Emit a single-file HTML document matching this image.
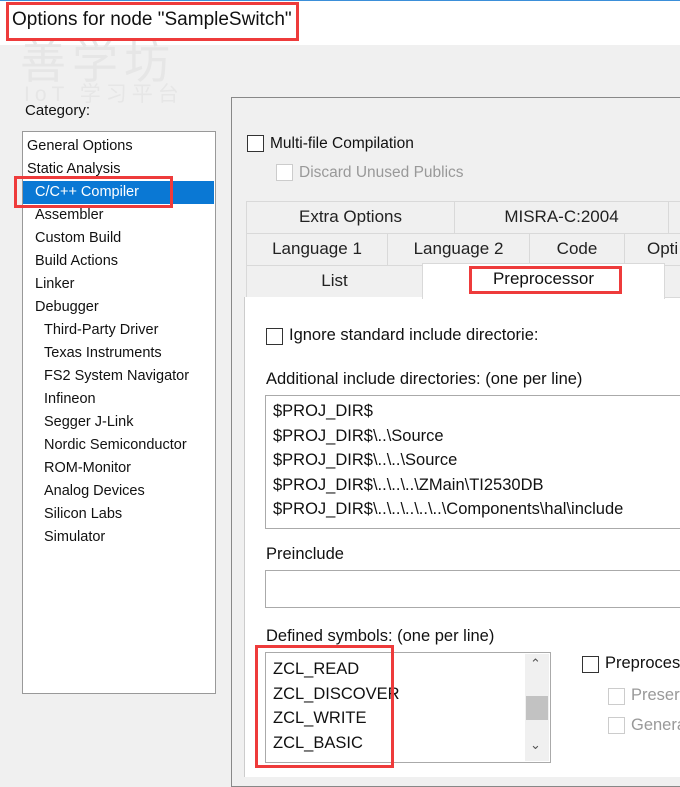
<!DOCTYPE html>
<html><head><meta charset="utf-8"><style>
*{margin:0;padding:0;box-sizing:border-box}
body{width:680px;height:776px;overflow:hidden;background:#f0f0f0;font-family:"Liberation Sans","Noto Sans CJK SC",sans-serif;position:relative;color:#111}
.a{position:absolute;white-space:nowrap}
.red{position:absolute;border:3px solid #ee3b3b}
.cb{position:absolute;width:17px;height:17px;border:1px solid #333;background:#fff}
.cbd{position:absolute;width:17px;height:17px;border:1px solid #ccc;background:#fff}
.tab{position:absolute;background:#f0f0f0;border:1px solid #d9d9d9;text-align:center;font-size:17px;line-height:30px;color:#222}
.li{position:absolute;left:27px;font-size:14.5px;line-height:23px}
.box{position:absolute;background:#fff;border:1px solid #aaa}
.t17{font-size:16.5px}
</style></head><body>
<div class="a" style="left:0;top:0;width:680px;height:45px;background:#fff;border-top:1px solid #3b8fd9"></div>
<div class="a" style="left:20px;top:26px;font-size:46px;color:#e6e6e6;letter-spacing:6px">善学坊</div>
<div class="a" style="left:24px;top:78px;font-size:21px;color:#e6e6e6;letter-spacing:5px">IoT 学习平台</div>
<div class="a" style="left:12px;top:9px;font-size:19px;color:#111">Options for node "SampleSwitch"</div>
<div class="red" style="left:6px;top:2px;width:293px;height:39px"></div>
<div class="a" style="left:25px;top:102px;font-size:15px">Category:</div>
<div class="box" style="left:22px;top:131px;width:194px;height:563px;border-color:#999"></div>
<div class="a" style="left:23px;top:181px;width:191px;height:23px;background:#0a78d4"></div>
<div class="li" style="top:135px">General Options</div>
<div class="li" style="top:158px">Static Analysis</div>
<div class="li" style="top:181px;left:35px;color:#fff">C/C++ Compiler</div>
<div class="li" style="top:204px;left:35px">Assembler</div>
<div class="li" style="top:227px;left:35px">Custom Build</div>
<div class="li" style="top:250px;left:35px">Build Actions</div>
<div class="li" style="top:273px;left:35px">Linker</div>
<div class="li" style="top:296px;left:35px">Debugger</div>
<div class="li" style="top:319px;left:44px">Third-Party Driver</div>
<div class="li" style="top:342px;left:44px">Texas Instruments</div>
<div class="li" style="top:365px;left:44px">FS2 System Navigator</div>
<div class="li" style="top:388px;left:44px">Infineon</div>
<div class="li" style="top:411px;left:44px">Segger J-Link</div>
<div class="li" style="top:434px;left:44px">Nordic Semiconductor</div>
<div class="li" style="top:457px;left:44px">ROM-Monitor</div>
<div class="li" style="top:480px;left:44px">Analog Devices</div>
<div class="li" style="top:503px;left:44px">Silicon Labs</div>
<div class="li" style="top:526px;left:44px">Simulator</div>
<div class="red" style="left:14px;top:176px;width:159px;height:32px"></div>

<div class="a" style="left:231px;top:97px;width:460px;height:690px;border:1px solid #888;border-right:none"></div>
<div class="cb" style="left:247px;top:135px"></div>
<div class="a" style="left:270px;top:135px;font-size:15.5px">Multi-file Compilation</div>
<div class="cbd" style="left:276px;top:164px"></div>
<div class="a" style="left:299px;top:164px;font-size:15.5px;color:#999">Discard Unused Publics</div>

<div class="tab" style="left:246px;top:201px;width:209px;height:33px">Extra Options</div>
<div class="tab" style="left:454px;top:201px;width:215px;height:33px">MISRA-C:2004</div>
<div class="tab" style="left:668px;top:201px;width:30px;height:33px"></div>
<div class="tab" style="left:246px;top:233px;width:142px;height:33px">Language 1</div>
<div class="tab" style="left:387px;top:233px;width:143px;height:33px">Language 2</div>
<div class="tab" style="left:529px;top:233px;width:96px;height:33px">Code</div>
<div class="tab" style="left:624px;top:233px;width:80px;height:33px;text-align:left;padding-left:22px">Opti</div>
<div class="tab" style="left:246px;top:265px;width:177px;height:33px">List</div>
<div class="a" style="left:244px;top:297px;width:440px;height:480px;background:#fff;border-left:1px solid #ccc"></div>
<div class="a" style="left:422px;top:263px;width:243px;height:36px;background:#fff;border:1px solid #d9d9d9;border-bottom:none"></div>
<div class="tab" style="left:664px;top:265px;width:30px;height:33px"></div>
<div class="a" style="left:422px;top:266px;width:243px;text-align:center;font-size:17px;line-height:26px">Preprocessor</div>
<div class="red" style="left:469px;top:266px;width:153px;height:28px"></div>

<div class="cb" style="left:266px;top:328px"></div>
<div class="a t17" style="left:289px;top:326px">Ignore standard include directorie:</div>
<div class="a t17" style="left:266px;top:370px">Additional include directories: (one per line)</div>
<div class="box" style="left:265px;top:395px;width:430px;height:134px"></div>
<div class="a t17" style="left:273px;top:399px;line-height:24.6px">$PROJ_DIR$<br>$PROJ_DIR$\..\Source<br>$PROJ_DIR$\..\..\Source<br>$PROJ_DIR$\..\..\..\ZMain\TI2530DB<br>$PROJ_DIR$\..\..\..\..\..\Components\hal\include</div>
<div class="a t17" style="left:266px;top:545px">Preinclude</div>
<div class="box" style="left:265px;top:570px;width:430px;height:38px"></div>
<div class="a t17" style="left:266px;top:627px">Defined symbols: (one per line)</div>
<div class="box" style="left:265px;top:652px;width:286px;height:111px"></div>
<div class="a" style="left:525px;top:654px;width:24px;height:107px;background:#f0f0f0"></div>
<div class="a" style="left:526px;top:696px;width:22px;height:24px;background:#c2c2c2"></div>
<div class="a" style="left:530px;top:656px;font-size:13px;color:#555">&#8963;</div>
<div class="a" style="left:530px;top:737px;font-size:13px;color:#555">&#8964;</div>
<div class="a t17" style="left:273px;top:657px;line-height:24.6px">ZCL_READ<br>ZCL_DISCOVER<br>ZCL_WRITE<br>ZCL_BASIC</div>
<div class="red" style="left:255px;top:645px;width:139px;height:123px"></div>
<div class="cb" style="left:582px;top:656px"></div>
<div class="a t17" style="left:605px;top:654px">Preprocessor</div>
<div class="cbd" style="left:608px;top:688px"></div>
<div class="a t17" style="left:631px;top:686px;color:#999">Preserve</div>
<div class="cbd" style="left:608px;top:717px"></div>
<div class="a t17" style="left:631px;top:716px;color:#999">Generate</div>
</body></html>
